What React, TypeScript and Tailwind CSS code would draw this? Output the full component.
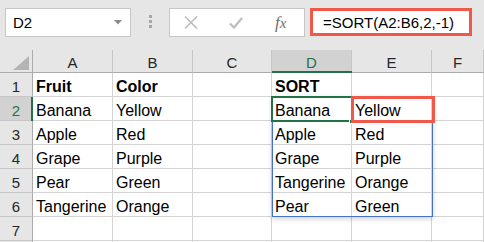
import React from "react";

const cols = [
  { l: "A", w: "w-[80px]" },
  { l: "B", w: "w-[80px]" },
  { l: "C", w: "w-[79px]" },
  { l: "D", w: "w-[80px]" },
  { l: "E", w: "w-[80px]" },
  { l: "F", w: "w-[52px]" },
];

type Cell = { t: string; b?: boolean };
const rows: Cell[][] = [
  [{ t: "Fruit", b: true }, { t: "Color", b: true }, { t: "" }, { t: "SORT", b: true }, { t: "" }, { t: "" }],
  [{ t: "Banana" }, { t: "Yellow" }, { t: "" }, { t: "Banana" }, { t: "Yellow" }, { t: "" }],
  [{ t: "Apple" }, { t: "Red" }, { t: "" }, { t: "Apple" }, { t: "Red" }, { t: "" }],
  [{ t: "Grape" }, { t: "Purple" }, { t: "" }, { t: "Grape" }, { t: "Purple" }, { t: "" }],
  [{ t: "Pear" }, { t: "Green" }, { t: "" }, { t: "Tangerine" }, { t: "Orange" }, { t: "" }],
  [{ t: "Tangerine" }, { t: "Orange" }, { t: "" }, { t: "Pear" }, { t: "Green" }, { t: "" }],
  [{ t: "" }, { t: "" }, { t: "" }, { t: "" }, { t: "" }, { t: "" }],
];

export default function App() {
  return (
    <div className="relative w-[484px] h-[242px] overflow-hidden bg-white font-['Liberation_Sans',Arial,sans-serif] text-[15px] text-black">
      {/* Toolbar */}
      <div className="flex h-[50px] bg-[#e6e6e6] pt-[8px]">
        <div className="ml-[5px] flex h-[29px] w-[126px] items-center justify-between border border-[#c6c6c6] bg-white pl-[7px] pr-[8px]">
          <span className="leading-[17px]">D2</span>
          <svg width="8" height="5" viewBox="0 0 8 5">
            <path d="M0 0 L8 0 L4 4.5 Z" fill="#8a8a8a" />
          </svg>
        </div>
        <div className="flex w-[38px] flex-col items-center pt-[7px]">
          <div className="flex flex-col gap-[2px]">
            <div className="h-[3px] w-[3px] bg-[#a6a6a6]" />
            <div className="h-[3px] w-[3px] bg-[#a6a6a6]" />
            <div className="h-[3px] w-[3px] bg-[#a6a6a6]" />
          </div>
        </div>
        <div className="flex h-[29px] w-[136px] items-center border border-[#c6c6c6] bg-white">
          <svg className="ml-[14px]" width="14" height="13" viewBox="0 0 14 13">
            <path d="M1 0.5 L13 12.5 M13 0.5 L1 12.5" stroke="#bdbdbd" strokeWidth="1.6" fill="none" />
          </svg>
          <svg className="ml-[31px]" width="14" height="12" viewBox="0 0 14 12">
            <path d="M1 6.5 L5 10.5 L13 1" stroke="#bdbdbd" strokeWidth="2.2" fill="none" />
          </svg>
          <span className="ml-[32px] font-['Liberation_Serif',serif] text-[17px] italic leading-[17px] text-[#6e6e6e]">
            f<span className="text-[15px]">x</span>
          </span>
        </div>
        <div className="ml-[5px] flex h-[28px] w-[162px] items-center border-[3px] border-[#f0584a] bg-white pl-[10px]">
          <span className="leading-[17px]">=SORT(A2:B6,2,-1)</span>
        </div>
      </div>

      {/* Grid */}
      <div className="flex flex-col">
        {/* Header row */}
        <div className="flex h-[23px] bg-[#e6e6e6]">
          <div className="relative w-[33px] shrink-0 border-r border-b border-[#ababab]">
            <svg className="absolute left-[13px] top-[6px]" width="17" height="14" viewBox="0 0 17 14">
              <path d="M16 0 L16 14 L0 14 Z" fill="#b4b4b4" />
            </svg>
          </div>
          {cols.map((c) => (
            <div
              key={c.l}
              className={`${c.w} flex shrink-0 items-end justify-center border-b border-r pb-[1px] leading-[17px] ${
                c.l === "D"
                  ? "border-b-[#ababab] border-r-[#c6c6c6] bg-[#d2d2d2] text-[#217346]"
                  : "border-b-[#ababab] border-r-[#c6c6c6] text-[#262626]"
              }`}
            >
              {c.l}
            </div>
          ))}
        </div>
        {rows.map((r, i) => (
          <div key={i} className="flex h-[24px]">
            <div
              className={`flex w-[33px] shrink-0 items-end justify-center border-r border-b border-r-[#ababab] border-b-[#c6c6c6] pb-[1px] leading-[17px] ${
                i === 1 ? "bg-[#d2d2d2] text-[#217346]" : "bg-[#e6e6e6] text-[#262626]"
              }`}
            >
              {i + 1}
            </div>
            {r.map((cell, j) => (
              <div
                key={j}
                className={`${cols[j].w} flex shrink-0 items-end overflow-visible whitespace-nowrap border-r border-b border-[#d4d4d4] pl-[3px] pb-[1px] text-[16px] leading-[17px] ${
                  cell.b ? "font-bold text-[15px]" : ""
                }`}
              >
                {cell.t}
              </div>
            ))}
          </div>
        ))}
        {/* Sliver of row 8 */}
        <div className="flex h-[2px]">
          <div className="w-[33px] shrink-0 border-r border-[#ababab] bg-[#e6e6e6]" />
          {cols.map((c) => (
            <div key={c.l} className={`${c.w} shrink-0 border-r border-[#d4d4d4]`} />
          ))}
        </div>
      </div>

      {/* Column D header green underline */}
      <div className="absolute left-[272px] top-[71px] h-[2px] w-[80px] bg-[#217346]" />
      {/* Row 2 header green right line */}
      <div className="absolute left-[31px] top-[97px] h-[24px] w-[2px] bg-[#217346]" />

      {/* Spill range (blue) */}
      <div className="pointer-events-none absolute left-[272px] top-[96px] h-[121px] w-[161px] border border-[#4472c4] shadow-[0_2px_5px_rgba(0,0,0,0.18)]" />

      {/* Active cell D2 */}
      <div className="pointer-events-none absolute left-[271px] top-[96px] h-[26px] w-[82px] border-2 border-[#217346]" />
      <div className="pointer-events-none absolute left-[349px] top-[119px] h-[5px] w-[5px] border border-white bg-[#217346]" />

      {/* Red annotation around E2 */}
      <div className="pointer-events-none absolute left-[351px] top-[96px] h-[27px] w-[84px] border-[3px] border-[#f0584a]" />
    </div>
  );
}
